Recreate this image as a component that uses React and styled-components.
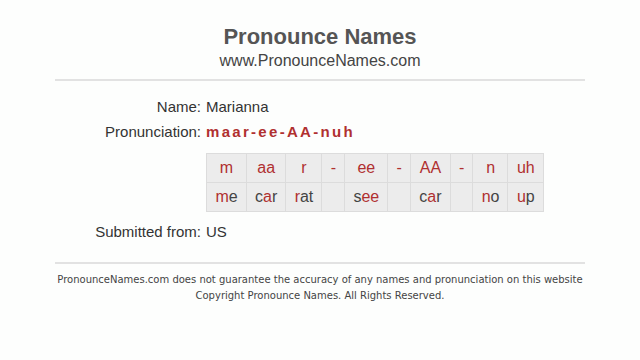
import React from 'react';
import styled, { createGlobalStyle } from 'styled-components';

const Global = createGlobalStyle`
  body {
    margin: 0;
    background: #fdfefd;
    font-family: "Liberation Sans", Arial, sans-serif;
  }
`;

const Page = styled.div`
  width: 530px;
  margin: 0 auto;
  padding-top: 23px;
`;

const Header = styled.div`
  text-align: center;
  padding-bottom: 8px;
  border-bottom: 2px solid #e2e2e2;
  h1 {
    margin: 0;
    font-size: 22px;
    line-height: 28px;
    color: #555;
    font-weight: bold;
  }
  div {
    font-size: 16px;
    line-height: 20px;
    color: #444;
  }
`;

const Details = styled.div`
  display: grid;
  grid-template-columns: 146px auto;
  column-gap: 5px;
  row-gap: 6px;
  padding-top: 16px;
  align-items: center;
  font-size: 15px;
  color: #333;
`;

const Label = styled.div`
  text-align: right;
  line-height: 19px;
`;

const Value = styled.div`
  line-height: 19px;
  ${(p) => p.$sound && `
    color: #b03030;
    font-weight: bold;
    letter-spacing: 2.3px;
    font-size: 15px;
  `}
`;

const TableWrap = styled.div`
  grid-column: 2;
  padding: 6px 0 4px;
`;

const Sounds = styled.table`
  border-collapse: collapse;
  font-size: 16px;
  td {
    background: #ececec;
    border: 1px solid #dcdcdc;
    height: 28px;
    padding: 0 8px 0 8.4px;
    text-align: center;
    color: #444;
  }
  tr:first-child td {
    color: #b03030;
  }
  b {
    font-weight: normal;
    color: #b03030;
  }
`;

const Footer = styled.div`
  margin-top: 21px;
  border-top: 2px solid #e2e2e2;
  padding-top: 8px;
  text-align: center;
  font-family: "DejaVu Sans", Verdana, sans-serif;
  font-size: 10px;
  line-height: 16px;
  color: #444;
`;

const sounds = ['m', 'aa', 'r', '-', 'ee', '-', 'AA', '-', 'n', 'uh'];
const examples = [
  ['m', 'e'], ['c', 'a', 'r'], ['r', 'at'], [], ['s', 'ee'], [], ['c', 'a', 'r'], [], ['n', 'o'], ['u', 'p'],
];

function Example({ parts }) {
  if (!parts.length) return null;
  if (parts.length === 3) return <>{parts[0]}<b>{parts[1]}</b>{parts[2]}</>;
  if (parts[0] === 's') return <>{parts[0]}<b>{parts[1]}</b></>;
  return <><b>{parts[0]}</b>{parts[1]}</>;
}

export default function App() {
  return (
    <Page>
      <Global />
      <Header>
        <h1>Pronounce Names</h1>
        <div>www.PronounceNames.com</div>
      </Header>
      <Details>
        <Label>Name:</Label>
        <Value>Marianna</Value>
        <Label>Pronunciation:</Label>
        <Value $sound>maar-ee-AA-nuh</Value>
        <TableWrap>
          <Sounds>
            <tbody>
              <tr>{sounds.map((s, i) => <td key={i}>{s}</td>)}</tr>
              <tr>{examples.map((e, i) => <td key={i}><Example parts={e} /></td>)}</tr>
            </tbody>
          </Sounds>
        </TableWrap>
        <Label>Submitted from:</Label>
        <Value>US</Value>
      </Details>
      <Footer>
        PronounceNames.com does not guarantee the accuracy of any names and pronunciation on this website
        <br />
        Copyright Pronounce Names. All Rights Reserved.
      </Footer>
    </Page>
  );
}
